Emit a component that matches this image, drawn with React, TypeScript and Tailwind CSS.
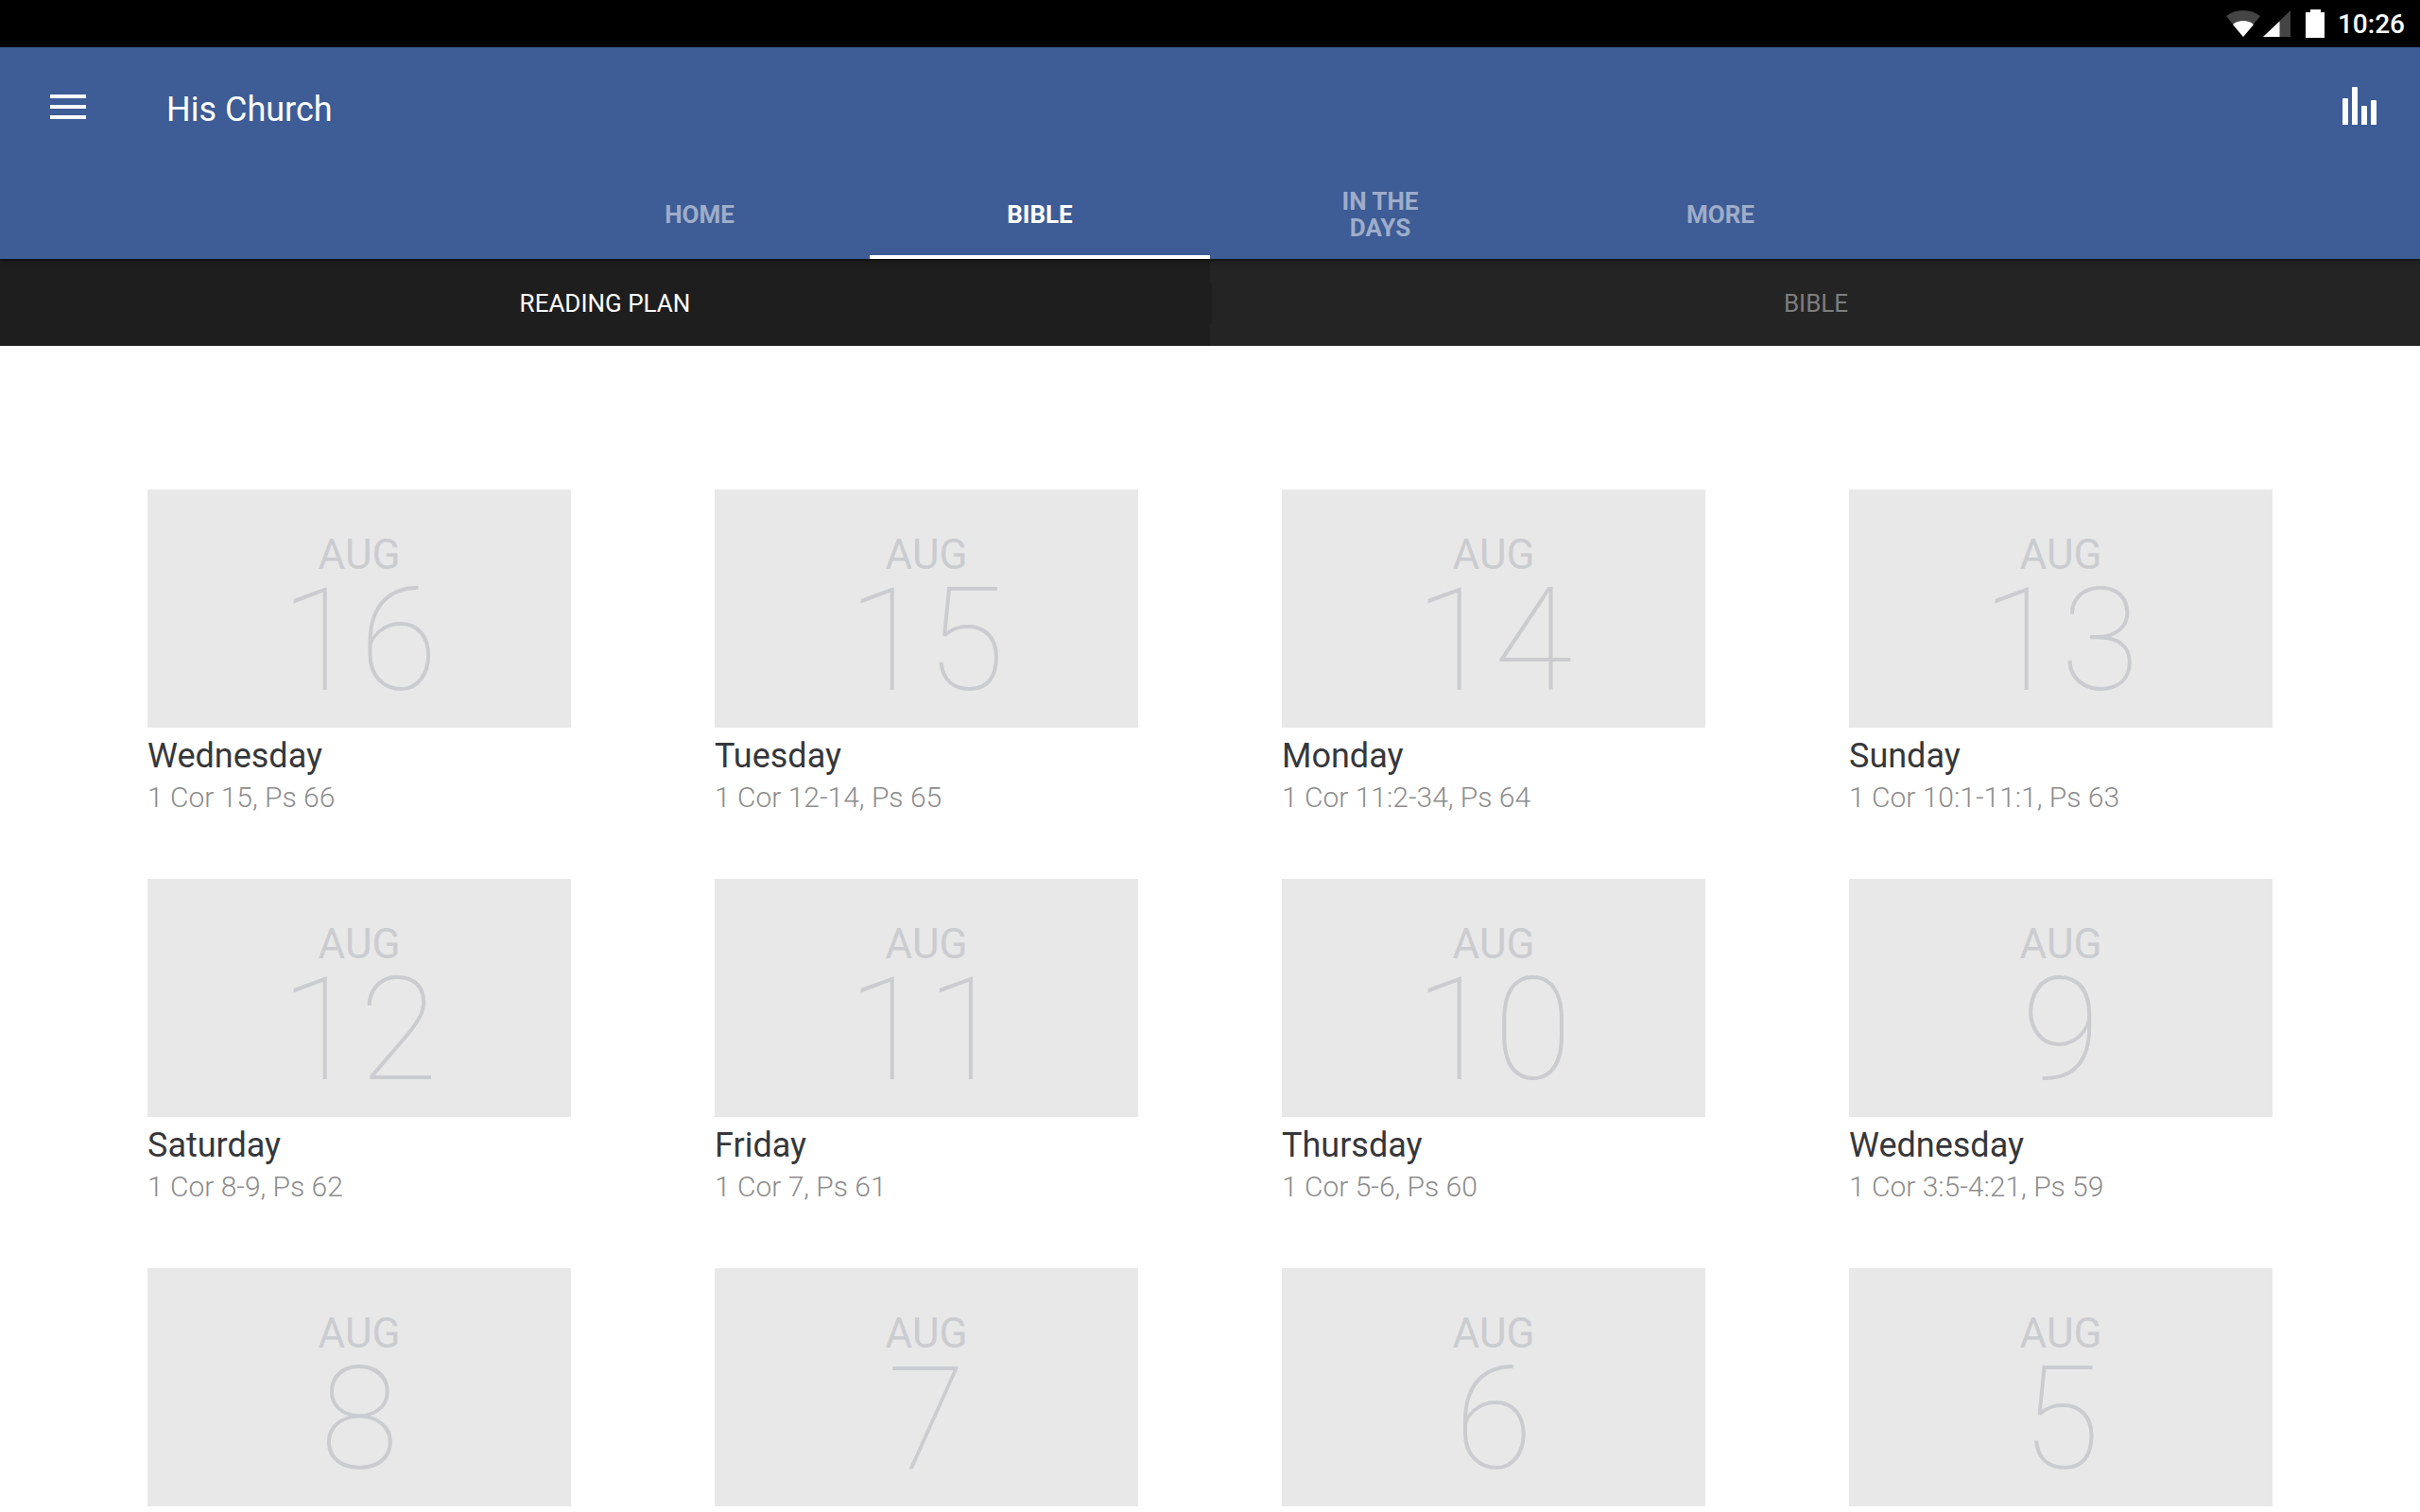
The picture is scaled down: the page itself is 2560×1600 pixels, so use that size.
import React from "react";

type Reading = { day: number; weekday?: string; passage?: string };

const readings: Reading[] = [
  { day: 16, weekday: "Wednesday", passage: "1 Cor 15, Ps 66" },
  { day: 15, weekday: "Tuesday", passage: "1 Cor 12-14, Ps 65" },
  { day: 14, weekday: "Monday", passage: "1 Cor 11:2-34, Ps 64" },
  { day: 13, weekday: "Sunday", passage: "1 Cor 10:1-11:1, Ps 63" },
  { day: 12, weekday: "Saturday", passage: "1 Cor 8-9, Ps 62" },
  { day: 11, weekday: "Friday", passage: "1 Cor 7, Ps 61" },
  { day: 10, weekday: "Thursday", passage: "1 Cor 5-6, Ps 60" },
  { day: 9, weekday: "Wednesday", passage: "1 Cor 3:5-4:21, Ps 59" },
  { day: 8 },
  { day: 7 },
  { day: 6 },
  { day: 5 },
];

const tabs = ["HOME", "BIBLE", "IN THE DAYS", "MORE"];

function StatusBar() {
  return (
    <div className="flex h-[50px] items-center justify-end bg-black pr-4 text-white">
      <svg className="h-7 w-9" viewBox="0 0 36 28" aria-hidden="true">
        <path d="M0 6C5 2 11 0 18 0s13 2 18 6L18 28z" fill="#444" />
        <path d="M7 15c3-3 7-4 11-4s8 1 11 4L18 28z" fill="#fff" />
      </svg>
      <svg className="ml-[3px] h-7 w-[29px]" viewBox="0 0 29 28" aria-hidden="true">
        <path d="M29 0v28H0z" fill="#444" />
        <path d="M17.500 11.500V28H0z" fill="#fff" />
      </svg>
      <svg className="ml-4 h-[30px] w-5" viewBox="0 0 20 30" aria-hidden="true">
        <path d="M5 0h11v3h4v27H0V3h5z" fill="#fff" />
      </svg>
      <time className="ml-3.5 pt-0.5 text-[28px] leading-8 font-medium">10:26</time>
    </div>
  );
}

function AppBar() {
  return (
    <header className="relative z-10 bg-[#3e5c95] text-white shadow-[0_1px_2px_rgba(0,0,0,0.5),0_4px_8px_rgba(0,0,0,0.2)]">
      <div className="flex h-32 items-center pr-[46px] pl-[53px]">
        <button type="button" aria-label="Open menu" className="pb-0.5">
          <svg className="block h-[26px] w-[38px]" viewBox="0 0 38 26" fill="#fff" aria-hidden="true">
            <path d="M0 0h38v4H0zM0 11h38v4H0zM0 22h38v4H0z" />
          </svg>
        </button>
        <h1 className="ml-[85px] pt-1 text-[36px] leading-11 font-normal">His Church</h1>
        <button type="button" aria-label="Now playing" className="ml-auto pb-1">
          <svg className="block h-10 w-9" viewBox="0 0 36 40" fill="#fff" aria-hidden="true">
            <path d="M0 13q0-1 1-1h4q1 0 1 1v27H0zM10 1q0-1 1-1h4q1 0 1 1v39h-6zM20 21q0-1 1-1h4q1 0 1 1v19h-6zM30 15q0-1 1-1h4q1 0 1 1v25h-6z" />
          </svg>
        </button>
      </div>
      <nav className="mx-auto grid h-24 max-w-[1440px] grid-cols-4">
        {tabs.map((tab) => (
          <a
            key={tab}
            href="#"
            aria-current={tab === "BIBLE" ? "page" : undefined}
            className={
              tab === "BIBLE"
                ? "flex items-center justify-center border-b-4 border-white pt-1.5 text-white"
                : "flex items-center justify-center border-b-4 border-transparent pt-1.5 text-white/50"
            }
          >
            <span className="w-24 text-center text-[26px] leading-7 font-bold">{tab}</span>
          </a>
        ))}
      </nav>
    </header>
  );
}

function SubTabs() {
  return (
    <nav className="flex h-[92px] items-center bg-[#242424] text-[26px] leading-8">
      <a href="#" aria-current="page" className="flex flex-1 items-center justify-center self-stretch bg-[#1e1e1e] pt-0.5 text-white">
        READING PLAN
      </a>
      <a href="#" className="flex flex-1 items-center self-stretch pt-0.5 text-[#7e7e7e]">
        <span className="h-11 w-0.5 bg-[#1f1f1f]" />
        <span className="flex-1 text-center">BIBLE</span>
      </a>
    </nav>
  );
}

function ReadingCard({ day, weekday, passage }: Reading) {
  return (
    <a href="#" className="block">
      <div className="flex aspect-video flex-col items-center bg-[#e8e8e8] pt-[43px] text-[#cbccd0]">
        <span className="text-[44px] leading-[52px]">AUG</span>
        <span className="text-[152px] leading-[130px] font-thin">{day}</span>
      </div>
      {weekday && <h2 className="mt-2 text-[36px] leading-11 font-normal text-[#36373b]">{weekday}</h2>}
      {passage && <p className="text-[30px] leading-11 font-light text-[#8c8c8c]">{passage}</p>}
    </a>
  );
}

export default function App() {
  return (
    <div className="min-h-screen bg-white font-[Roboto,sans-serif]">
      <StatusBar />
      <AppBar />
      <SubTabs />
      <main className="grid grid-cols-4 gap-x-[152px] gap-y-16 px-[156px] pt-[152px]">
        {readings.map((reading) => (
          <ReadingCard key={reading.day} {...reading} />
        ))}
      </main>
    </div>
  );
}
